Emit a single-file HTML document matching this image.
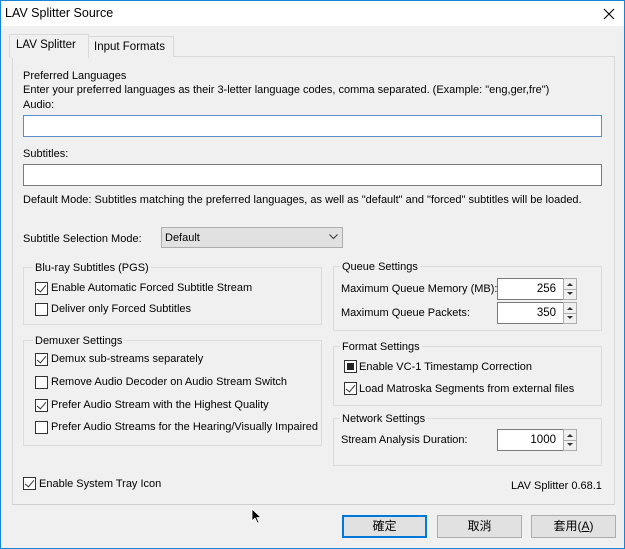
<!DOCTYPE html>
<html><head><meta charset="utf-8"><style>
*{box-sizing:border-box;margin:0;padding:0}
body{width:625px;height:549px;overflow:hidden;background:#f0f0f0;font-family:"Liberation Sans","Noto Sans CJK TC",sans-serif;font-size:11px;color:#000;position:relative}
.a{position:absolute;white-space:nowrap}
.t{line-height:17px}
.win{position:absolute;left:0;top:0;width:625px;height:549px;border:1px solid #1883d7}
.grp{position:absolute;border:1px solid #dcdcdc}
.gt{position:absolute;background:#f0f0f0;padding:0 2px;top:-7px;left:9px;line-height:14px}
.cb{position:absolute;width:13px;height:13px;border:1px solid #333;background:#fff}
.cb.c::after{content:"";position:absolute;left:3px;top:0px;width:4px;height:8px;border:solid #333;border-width:0 1.3px 1.3px 0;transform:rotate(40deg)}
.cb.s::after{content:"";position:absolute;left:2px;top:2px;width:7px;height:7px;background:#222}
.in{position:absolute;background:#fff;border:1px solid #7a7a7a}
.num{position:absolute;background:#fff;border:1px solid #7a7a7a;text-align:right;padding:4px 7px 0 0;height:22px;width:67px;font-size:11.5px}
.sp{position:absolute;width:14px;height:22px;border:1px solid #adadad;background:#f0f0f0}
.sp::before,.sp::after{content:"";position:absolute;left:3px;border-left:3px solid transparent;border-right:3px solid transparent}
.sp::before{top:4px;border-bottom:3px solid #333}
.sp::after{bottom:4px;border-top:3px solid #333}
.sp i{position:absolute;left:0;right:0;top:10px;border-top:1px solid #adadad}
.btn{position:absolute;top:515px;width:85px;height:23px;background:#e1e1e1;border:1px solid #adadad;text-align:center;line-height:21px;font-size:12px}
</style></head><body>
<div class="a" style="left:0;top:0;width:625px;height:26px;background:#fff"></div>
<div class="a" style="left:5px;top:6px;font-size:12.5px">LAV Splitter Source</div>
<svg class="a" style="left:603px;top:8px" width="12" height="12"><path d="M1 1L11 11M11 1L1 11" stroke="#000" stroke-width="1.1"/></svg>
<div class="a" style="left:12px;top:56px;width:603px;height:449px;border:1px solid #d9d9d9;border-bottom-color:#d0d0d0;background:#f0f0f0"></div>
<div class="a" style="left:88px;top:36px;width:86px;height:21px;border:1px solid #d9d9d9;border-bottom:none;background:#f0f0f0;padding:4px 0 0 5px;font-size:11.5px">Input Formats</div>
<div class="a" style="left:9px;top:34px;width:80px;height:24px;border:1px solid #d9d9d9;border-bottom:none;background:#f0f0f0;padding:4px 0 0 6px;font-size:11.5px">LAV Splitter</div>

<div class="a t" style="left:23px;top:68px">Preferred Languages</div>
<div class="a t" style="left:23px;top:82px">Enter your preferred languages as their 3-letter language codes, comma separated. (Example: "eng,ger,fre")</div>
<div class="a t" style="left:23px;top:97px">Audio:</div>
<div class="in" style="left:23px;top:115px;width:579px;height:22px;border-color:#5b8ec5"></div>
<div class="a t" style="left:23px;top:146px">Subtitles:</div>
<div class="in" style="left:23px;top:164px;width:579px;height:22px"></div>
<div class="a t" style="left:23px;top:192px">Default Mode: Subtitles matching the preferred languages, as well as "default" and "forced" subtitles will be loaded.</div>
<div class="a t" style="left:23px;top:231px">Subtitle Selection Mode:</div>
<div class="a" style="left:161px;top:227px;width:182px;height:21px;background:#e1e1e1;border:1px solid #adadad;padding:4px 0 0 3px">Default</div>
<svg class="a" style="left:329px;top:234px" width="9" height="6"><path d="M0.5 0.5L4.5 4.5L8.5 0.5" stroke="#333" fill="none"/></svg>

<div class="grp" style="left:23px;top:267px;width:299px;height:58px"><div class="gt">Blu-ray Subtitles (PGS)</div></div>
<div class="cb c" style="left:35px;top:282px"></div><div class="a t" style="left:51px;top:280px">Enable Automatic Forced Subtitle Stream</div>
<div class="cb" style="left:35px;top:303px"></div><div class="a t" style="left:51px;top:301px">Deliver only Forced Subtitles</div>

<div class="grp" style="left:23px;top:340px;width:299px;height:106px"><div class="gt">Demuxer Settings</div></div>
<div class="cb c" style="left:35px;top:353px"></div><div class="a t" style="left:51px;top:351px">Demux sub-streams separately</div>
<div class="cb" style="left:35px;top:376px"></div><div class="a t" style="left:51px;top:374px">Remove Audio Decoder on Audio Stream Switch</div>
<div class="cb c" style="left:35px;top:399px"></div><div class="a t" style="left:51px;top:397px">Prefer Audio Stream with the Highest Quality</div>
<div class="cb" style="left:35px;top:421px"></div><div class="a t" style="left:51px;top:419px">Prefer Audio Streams for the Hearing/Visually Impaired</div>

<div class="grp" style="left:333px;top:266px;width:269px;height:65px"><div class="gt" style="left:6px">Queue Settings</div></div>
<div class="a t" style="left:341px;top:281px">Maximum Queue Memory (MB):</div>
<div class="num" style="left:497px;top:278px">256</div><div class="sp" style="left:563px;top:278px"><i></i></div>
<div class="a t" style="left:341px;top:305px">Maximum Queue Packets:</div>
<div class="num" style="left:497px;top:302px">350</div><div class="sp" style="left:563px;top:302px"><i></i></div>

<div class="grp" style="left:333px;top:346px;width:269px;height:60px"><div class="gt" style="left:6px">Format Settings</div></div>
<div class="cb s" style="left:344px;top:360px"></div><div class="a t" style="left:359px;top:359px">Enable VC-1 Timestamp Correction</div>
<div class="cb c" style="left:344px;top:382px"></div><div class="a t" style="left:359px;top:381px">Load Matroska Segments from external files</div>

<div class="grp" style="left:333px;top:418px;width:269px;height:48px"><div class="gt" style="left:6px">Network Settings</div></div>
<div class="a t" style="left:341px;top:432px">Stream Analysis Duration:</div>
<div class="num" style="left:497px;top:429px">1000</div><div class="sp" style="left:563px;top:429px"><i></i></div>

<div class="cb c" style="left:23px;top:477px"></div><div class="a t" style="left:39px;top:476px">Enable System Tray Icon</div>
<div class="a t" style="left:511px;top:478px">LAV Splitter 0.68.1</div>

<div class="btn" style="left:342px;border:2px solid #0078d7;line-height:19px">確定</div>
<div class="btn" style="left:437px">取消</div>
<div class="btn" style="left:531px">套用(<u>A</u>)</div>
<svg class="a" style="left:251px;top:508px" width="12" height="18"><path d="M1 1L1 13L4 10L6.5 15L8 14.5L5.8 9.5L10 9.5Z" fill="#000" stroke="#fff" stroke-width="0.8"/></svg>
<div class="win"></div>
</body></html>
